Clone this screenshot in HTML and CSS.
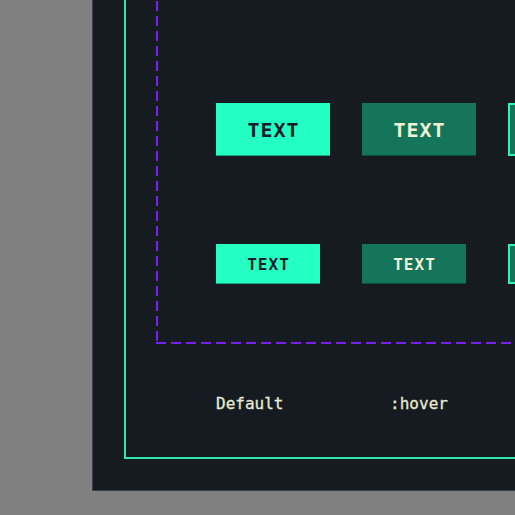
FILE: index.html
```html
<!DOCTYPE html>
<html lang="en">

<head>
    <meta charset="UTF-8">
    <meta name="viewport" content="width=device-width, initial-scale=1.0">
    <title>Button states</title>
    <link rel="stylesheet" href="styles.css">
</head>

<body>
    <div class="panel">
        <div class="frame">
            <div class="states">
                <div class="btn-row">
                    <button class="btn btn-lg">TEXT</button>
                    <button class="btn btn-lg is-hover">TEXT</button>
                    <button class="btn btn-lg is-focus">TEXT</button>
                </div>
                <div class="btn-row">
                    <button class="btn btn-sm">TEXT</button>
                    <button class="btn btn-sm is-hover">TEXT</button>
                    <button class="btn btn-sm is-focus">TEXT</button>
                </div>
            </div>
            <div class="labels">
                <span class="label label-first">Default</span>
                <span class="label">:hover</span>
                <span class="label">:focus</span>
            </div>
        </div>
    </div>
</body>

</html>
```

FILE: styles.css
```css
html,
body {
    overflow: hidden;
}

body {
    margin: 0;
    background-color: #808080;
    font-family: "DejaVu Sans Mono", "Liberation Mono", monospace;
}

.panel {
    width: max-content;
    margin: -77px 0 0 92px;
    padding: 31px;
    background-color: #161a21;
    border-left: 1px solid #3b3e45;
    border-bottom: 1px solid #3b3e45;
}

.frame {
    padding: 30px 30px 44px 30px;
    border: 2px solid #2ee6b2;
}

/* dashed outline drawn with gradients: 10px dash, 5px gap */
.states {
    display: flex;
    flex-direction: column;
    gap: 88px;
    padding: 117px 60px 59.5px 60px;
    background:
        repeating-linear-gradient(to bottom, #7a20f0 0 10px, transparent 10px 15px) left top / 2px 100% no-repeat,
        repeating-linear-gradient(to right, #7a20f0 0 10px, transparent 10px 15px) left bottom / 100% 2px no-repeat;
}

.btn-row {
    display: grid;
    grid-template-columns: repeat(3, 114px);
    gap: 32px;
}

.btn {
    display: flex;
    align-items: center;
    justify-content: center;
    box-sizing: border-box;
    padding: 0 0 0 1px;
    border: none;
    font-family: "DejaVu Sans Mono", "Liberation Mono", monospace;
    font-weight: bold;
    letter-spacing: 1px;
    background-color: #24ffc4;
    color: #16202a;
    box-shadow: inset 0 -1px 0 rgba(0, 0, 0, 0.35);
}

.btn-lg {
    width: 114px;
    height: 53px;
    font-size: 20px;
}

.btn-sm {
    width: 104px;
    height: 40px;
    font-size: 16px;
}

.is-hover {
    background-color: #15755a;
    color: #eef1d3;
}

.is-focus {
    background-color: #15755a;
    color: #eef1d3;
    border: 2px solid #2ef2b9;
    box-shadow: none;
}

.labels {
    display: grid;
    grid-template-columns: repeat(3, 114px);
    gap: 32px;
    margin: 50px 0 0 60px;
    line-height: 19px;
}

.label {
    font-size: 16px;
    color: #e6ead0;
    text-align: center;
    -webkit-text-stroke: 0.3px #e6ead0;
}

.label-first {
    text-align: left;
}
```
